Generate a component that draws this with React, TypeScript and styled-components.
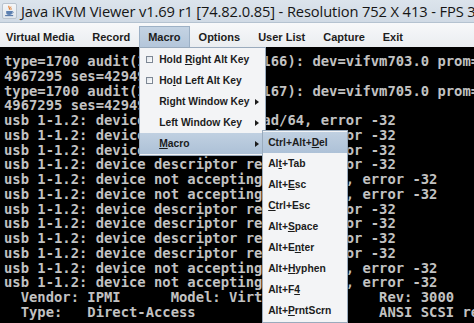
import React from "react";
import styled, { createGlobalStyle } from "styled-components";

const Global = createGlobalStyle`
  html, body { margin: 0; padding: 0; background: #000; overflow: hidden; }
  #root { width: 474px; height: 323px; }
`;

const Window = styled.div`
  width: 474px;
  height: 323px;
  display: flex;
  flex-direction: column;
  overflow: hidden;
  background: #000;
`;

const TitleBar = styled.div`
  height: 22px;
  flex: none;
  display: flex;
  align-items: center;
  gap: 4px;
  padding-left: 2px;
  background: linear-gradient(#dce4ec, #d0dae5);
  border-bottom: 1px solid #b4c2d0;
  font-family: "Open Sans", "Noto Sans", sans-serif;
  font-size: 14.7px;
  letter-spacing: -0.12px;
  color: #151515;
  white-space: nowrap;
  overflow: hidden;
`;

const TitleText = styled.span`
  flex: none;
`;

const IconBox = styled.div`
  width: 13px;
  height: 14px;
  flex: none;
  display: flex;
  align-items: center;
  justify-content: center;
  border: 1px solid #b9c3ce;
  border-radius: 2px;
  background: linear-gradient(#f4f6f8, #e0e6ec);
`;

const MenuBar = styled.div`
  height: 24px;
  flex: none;
  display: flex;
  align-items: flex-end;
  background: linear-gradient(#f7f8fa, #eaedf0);
  font-family: "Liberation Sans", Arial, sans-serif;
  font-weight: bold;
  font-size: 11px;
  color: #1c1c1c;
  position: relative;
  z-index: 2;
`;

const MenuItem = styled.div<{ $active?: boolean }>`
  position: relative;
  height: 21px;
  box-sizing: border-box;
  display: flex;
  align-items: center;
  padding: 0 8px;
  white-space: nowrap;
  border: 1px solid ${(p) => (p.$active ? "#9cb0c5" : "transparent")};
  border-bottom: none;
  background: ${(p) => (p.$active ? "linear-gradient(#c4d3e3, #b4c6da)" : "transparent")};
  &:first-child { padding-left: 5px; }
`;

const Dropdown = styled.div`
  position: absolute;
  top: 100%;
  left: -1px;
  width: 127px;
  box-sizing: border-box;
  padding: 1px 0;
  background: #f3f4f6;
  border: 1px solid #9aabbd;
  box-shadow: 1px 1px 1px rgba(0, 0, 0, 0.25);
  font-size: 10.3px;
`;

const Row = styled.div<{ $active?: boolean; $indent?: number }>`
  position: relative;
  height: 21px;
  display: flex;
  align-items: center;
  padding-left: ${(p) => p.$indent ?? 6}px;
  background: ${(p) => (p.$active ? "linear-gradient(#c0d0e1, #adc1d7)" : "transparent")};
  white-space: nowrap;
`;

const Label = styled.span`
  white-space: pre;
`;

const Check = styled.span<{ $hidden?: boolean }>`
  width: 7px;
  height: 7px;
  flex: none;
  margin-right: 6px;
  box-sizing: border-box;
  border: ${(p) => (p.$hidden ? "none" : "1px solid #7d8794")};
  background: ${(p) => (p.$hidden ? "transparent" : "linear-gradient(135deg, #dfe4ea, #ffffff)")};
`;

const Arrow = styled.span`
  margin-left: auto;
  margin-right: 6px;
  width: 0;
  height: 0;
  border-top: 3.5px solid transparent;
  border-bottom: 3.5px solid transparent;
  border-left: 4px solid #1c1c1c;
`;

const SubMenu = styled.div`
  position: absolute;
  left: 122px;
  top: -3px;
  width: 86px;
  box-sizing: border-box;
  padding: 1px 0;
  background: #f3f4f6;
  border: 1px solid #9aabbd;
  box-shadow: 1px 1px 1px rgba(0, 0, 0, 0.25);
`;

const U = styled.span`
  text-decoration: underline;
  text-underline-offset: 1px;
`;

const Console = styled.div`
  flex: 1;
  background: #000;
  padding: 7px 0 0 4px;
  font-family: "DejaVu Sans Mono", "Liberation Mono", monospace;
  font-weight: bold;
  font-size: 13.85px;
  line-height: 14.75px;
  color: #c2c2c2;
  white-space: pre;
  overflow: hidden;
`;

const Line = styled.div`
  height: 14.75px;
`;

const JavaIcon = () => (
  <svg width="11" height="12" viewBox="0 0 15 16">
    <path d="M7 1 C5 3 9 4 7 6" stroke="#e2731f" strokeWidth="1.5" fill="none" />
    <path d="M9.5 2 C8 4 11 4.5 9.3 6.5" stroke="#e2731f" strokeWidth="1.3" fill="none" />
    <path d="M3 8 h8 v2.5 c0 2 -1.5 3 -4 3 s-4 -1 -4 -3 z" fill="#5b7fb0" />
    <path d="M11 8.6 c2.2 0 2.2 2.4 0 2.4" stroke="#5b7fb0" strokeWidth="1.2" fill="none" />
    <path d="M1.5 14.3 h11" stroke="#4a6fa5" strokeWidth="1.4" />
  </svg>
);

const desc = "usb 1-1.2: device descriptor read/64, error -32";
const notAcc = "usb 1-1.2: device not accepting address 3, error -32";

const lines = [
  "type=1700 audit(1389855478.629:166): dev=vifvm703.0 prom=256 old_prom=0 auid=429",
  "4967295 ses=4294967295",
  "type=1700 audit(1389855479.102:167): dev=vifvm705.0 prom=256 old_prom=0 auid=429",
  "4967295 ses=4294967295",
  desc,
  desc,
  desc,
  desc,
  notAcc,
  notAcc,
  desc,
  desc,
  desc,
  desc,
  notAcc,
  notAcc,
  "  Vendor: IPMI      Model: Virtual Floppy    Rev: 3000",
  "  Type:   Direct-Access                      ANSI SCSI revision: 02",
];

const menus = ["Virtual Media", "Record", "Macro", "Options", "User List", "Capture", "Exit"];

const macros: [string, string, string][] = [
  ["Ctrl+Alt+", "D", "el"],
  ["Al", "t", "+Tab"],
  ["Alt+", "E", "sc"],
  ["", "C", "trl+Esc"],
  ["Alt+", "S", "pace"],
  ["Alt+E", "n", "ter"],
  ["Alt+", "H", "yphen"],
  ["Alt+F", "4", ""],
  ["Alt+", "P", "rntScrn"],
];

export default function App() {
  return (
    <Window>
      <Global />
      <TitleBar>
        <IconBox>
          <JavaIcon />
        </IconBox>
        <TitleText>Java iKVM Viewer v1.69 r1 [74.82.0.85] - Resolution 752 X 413 - FPS 3</TitleText>
      </TitleBar>
      <MenuBar>
        {menus.map((m) =>
          m === "Macro" ? (
            <MenuItem key={m} $active>
              {m}
              <Dropdown>
                <Row>
                  <Check />
                  <Label>
                    Hold <U>R</U>ight Alt Key
                  </Label>
                </Row>
                <Row>
                  <Check />
                  <Label>
                    Ho<U>l</U>d Left Alt Key
                  </Label>
                </Row>
                <Row>
                  <Check $hidden />
                  <Label>Right Window Key</Label>
                  <Arrow />
                </Row>
                <Row>
                  <Check $hidden />
                  <Label>Left Window Key</Label>
                  <Arrow />
                </Row>
                <Row $active>
                  <Check $hidden />
                  <Label>
                    <U>M</U>acro
                  </Label>
                  <Arrow />
                  <SubMenu>
                    {macros.map(([a, b, c], i) => (
                      <Row key={i} $active={i === 0} $indent={5}>
                        <Label>
                          {a}
                          <U>{b}</U>
                          {c}
                        </Label>
                      </Row>
                    ))}
                  </SubMenu>
                </Row>
              </Dropdown>
            </MenuItem>
          ) : (
            <MenuItem key={m}>{m}</MenuItem>
          )
        )}
      </MenuBar>
      <Console>
        {lines.map((l, i) => (
          <Line key={i}>{l}</Line>
        ))}
      </Console>
    </Window>
  );
}
